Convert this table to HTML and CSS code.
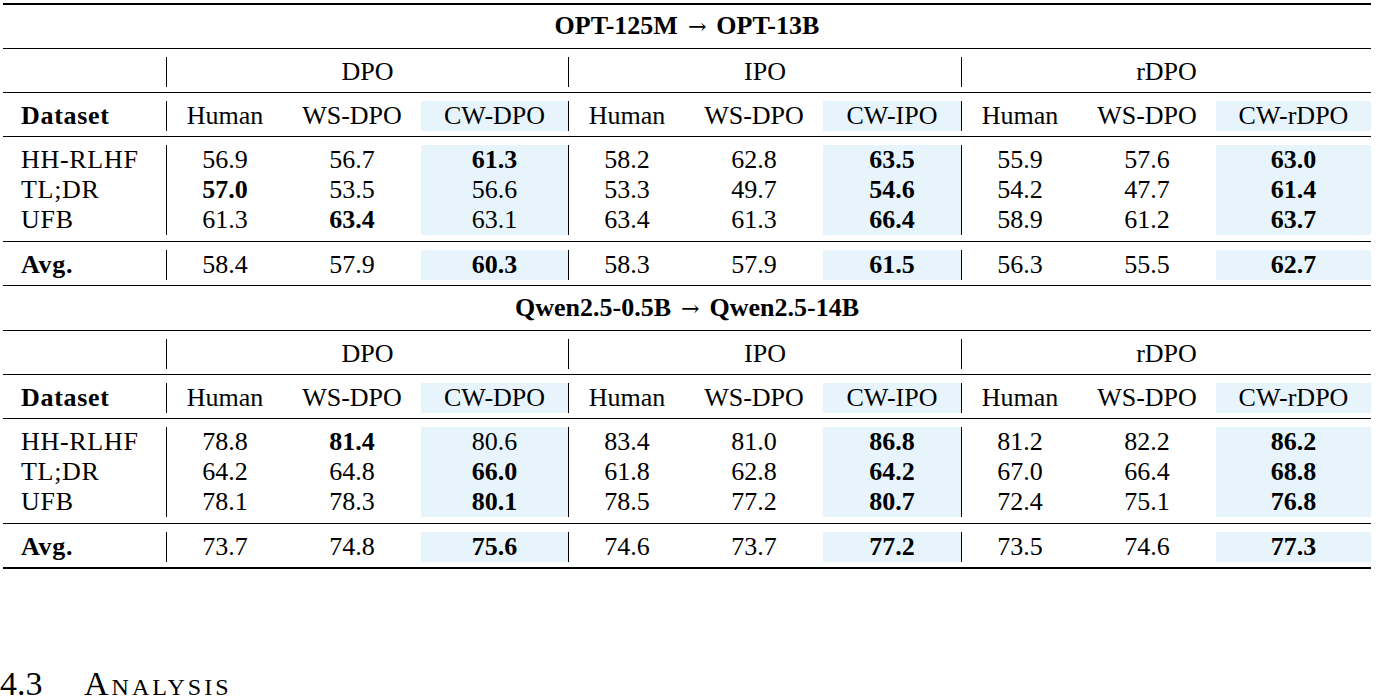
FILE: index.html
```html
<!DOCTYPE html>
<html lang="en">
<head>
<meta charset="utf-8">
<title>Results table</title>
<link rel="stylesheet" href="styles.css">
</head>
<body>
<table class="results">
  <colgroup>
    <col class="c-name">
    <col class="c-h"><col class="c-ws"><col class="c-cw1">
    <col class="c-h"><col class="c-ws"><col class="c-cw2">
    <col class="c-h"><col class="c-ws"><col class="c-cw3">
  </colgroup>
  <tbody>
    <tr class="rule thick"><td colspan="10"></td></tr>
    <tr class="title t1"><td colspan="10"><b>OPT-125M</b><span class="arrow">→</span><b>OPT-13B</b></td></tr>
    <tr class="rule"><td colspan="10"></td></tr>
    <tr class="gap g-top"><td colspan="10"></td></tr>
    <tr class="row"><td class="name"></td><td colspan="3" class="sep">DPO</td><td colspan="3" class="sep">IPO</td><td colspan="3" class="sep">rDPO</td></tr>
    <tr class="gap g-bot"><td colspan="10"></td></tr>
    <tr class="rule"><td colspan="10"></td></tr>
    <tr class="gap g-top"><td colspan="10"></td></tr>
    <tr class="row"><td class="name"><b>Dataset</b></td><td class="sep">Human</td><td>WS-DPO</td><td class="hl">CW-DPO</td><td class="sep">Human</td><td>WS-DPO</td><td class="hl">CW-IPO</td><td class="sep">Human</td><td>WS-DPO</td><td class="hl">CW-rDPO</td></tr>
    <tr class="gap g-bot"><td colspan="10"></td></tr>
    <tr class="rule"><td colspan="10"></td></tr>
    <tr class="gap g-top"><td colspan="10"></td></tr>
    <tr class="row"><td class="name">HH-RLHF</td><td class="sep">56.9</td><td>56.7</td><td class="hl"><b>61.3</b></td><td class="sep">58.2</td><td>62.8</td><td class="hl"><b>63.5</b></td><td class="sep">55.9</td><td>57.6</td><td class="hl"><b>63.0</b></td></tr>
    <tr class="row"><td class="name">TL;DR</td><td class="sep"><b>57.0</b></td><td>53.5</td><td class="hl">56.6</td><td class="sep">53.3</td><td>49.7</td><td class="hl"><b>54.6</b></td><td class="sep">54.2</td><td>47.7</td><td class="hl"><b>61.4</b></td></tr>
    <tr class="row"><td class="name">UFB</td><td class="sep">61.3</td><td><b>63.4</b></td><td class="hl">63.1</td><td class="sep">63.4</td><td>61.3</td><td class="hl"><b>66.4</b></td><td class="sep">58.9</td><td>61.2</td><td class="hl"><b>63.7</b></td></tr>
    <tr class="gap g-bot2"><td colspan="10"></td></tr>
    <tr class="rule"><td colspan="10"></td></tr>
    <tr class="gap g-top"><td colspan="10"></td></tr>
    <tr class="row"><td class="name"><b>Avg.</b></td><td class="sep">58.4</td><td>57.9</td><td class="hl"><b>60.3</b></td><td class="sep">58.3</td><td>57.9</td><td class="hl"><b>61.5</b></td><td class="sep">56.3</td><td>55.5</td><td class="hl"><b>62.7</b></td></tr>
    <tr class="gap g-bot"><td colspan="10"></td></tr>
    <tr class="rule"><td colspan="10"></td></tr>
    <tr class="title t2"><td colspan="10"><b>Qwen2.5-0.5B</b><span class="arrow">→</span><b>Qwen2.5-14B</b></td></tr>
    <tr class="rule"><td colspan="10"></td></tr>
    <tr class="gap g-top"><td colspan="10"></td></tr>
    <tr class="row"><td class="name"></td><td colspan="3" class="sep">DPO</td><td colspan="3" class="sep">IPO</td><td colspan="3" class="sep">rDPO</td></tr>
    <tr class="gap g-bot"><td colspan="10"></td></tr>
    <tr class="rule"><td colspan="10"></td></tr>
    <tr class="gap g-top"><td colspan="10"></td></tr>
    <tr class="row"><td class="name"><b>Dataset</b></td><td class="sep">Human</td><td>WS-DPO</td><td class="hl">CW-DPO</td><td class="sep">Human</td><td>WS-DPO</td><td class="hl">CW-IPO</td><td class="sep">Human</td><td>WS-DPO</td><td class="hl">CW-rDPO</td></tr>
    <tr class="gap g-bot"><td colspan="10"></td></tr>
    <tr class="rule"><td colspan="10"></td></tr>
    <tr class="gap g-top"><td colspan="10"></td></tr>
    <tr class="row"><td class="name">HH-RLHF</td><td class="sep">78.8</td><td><b>81.4</b></td><td class="hl">80.6</td><td class="sep">83.4</td><td>81.0</td><td class="hl"><b>86.8</b></td><td class="sep">81.2</td><td>82.2</td><td class="hl"><b>86.2</b></td></tr>
    <tr class="row"><td class="name">TL;DR</td><td class="sep">64.2</td><td>64.8</td><td class="hl"><b>66.0</b></td><td class="sep">61.8</td><td>62.8</td><td class="hl"><b>64.2</b></td><td class="sep">67.0</td><td>66.4</td><td class="hl"><b>68.8</b></td></tr>
    <tr class="row"><td class="name">UFB</td><td class="sep">78.1</td><td>78.3</td><td class="hl"><b>80.1</b></td><td class="sep">78.5</td><td>77.2</td><td class="hl"><b>80.7</b></td><td class="sep">72.4</td><td>75.1</td><td class="hl"><b>76.8</b></td></tr>
    <tr class="gap g-bot2"><td colspan="10"></td></tr>
    <tr class="rule"><td colspan="10"></td></tr>
    <tr class="gap g-top"><td colspan="10"></td></tr>
    <tr class="row"><td class="name"><b>Avg.</b></td><td class="sep">73.7</td><td>74.8</td><td class="hl"><b>75.6</b></td><td class="sep">74.6</td><td>73.7</td><td class="hl"><b>77.2</b></td><td class="sep">73.5</td><td>74.6</td><td class="hl"><b>77.3</b></td></tr>
    <tr class="gap g-bot"><td colspan="10"></td></tr>
    <tr class="rule thick"><td colspan="10"></td></tr>
  </tbody>
</table>
<h3 class="section"><span class="num">4.3</span><span class="stitle">Analysis</span></h3>
</body>
</html>
```
FILE: styles.css
```css
html, body {
  margin: 0;
  padding: 0;
  background: #ffffff;
  color: #000000;
  font-family: "Liberation Serif", "Times New Roman", serif;
}

.results {
  margin: 3px 0 0 3px;
  width: 1368px;
  table-layout: fixed;
  border-collapse: separate;
  border-spacing: 0;
  font-size: 26px;
}

.c-name { width: 163px; }
.c-h { width: 117px; }
.c-ws { width: 138px; }
.c-cw1 { width: 147px; }
.c-cw2 { width: 138px; }
.c-cw3 { width: 155px; }

.results td {
  padding: 0;
  text-align: center;
  white-space: nowrap;
}

.results b { font-weight: 700; }

.rule td {
  height: 1px;
  background: #000000;
  font-size: 0;
  line-height: 0;
}

.rule.thick td { height: 2px; }

.gap td {
  font-size: 0;
  line-height: 0;
}

.g-top td { height: 8px; }
.g-bot td { height: 5px; }
.g-bot2 td { height: 6px; }

.title td {
  font-weight: 700;
  line-height: 30px;
}
.t1 td { height: 43px; }
.t2 td { height: 44px; }

.title .arrow {
  font-family: "DejaVu Serif", serif;
  font-weight: 400;
  font-size: 22px;
  margin: 0 10px;
}

.row td {
  height: 30px;
  line-height: 30px;
}

.row td.name {
  text-align: left;
  padding-left: 18px;
  letter-spacing: 0.7px;
}

.row td.sep {
  border-left: 1px solid #000000;
}

.row td.hl {
  background: #e7f4fc;
}

.section {
  margin: 95px 0 0 0;
  font-size: 34px;
  font-weight: 400;
  line-height: 40px;
}

.section .num {
  display: inline-block;
  width: 84px;
}

.section .stitle {
  font-variant: small-caps;
  letter-spacing: 3px;
}
```
